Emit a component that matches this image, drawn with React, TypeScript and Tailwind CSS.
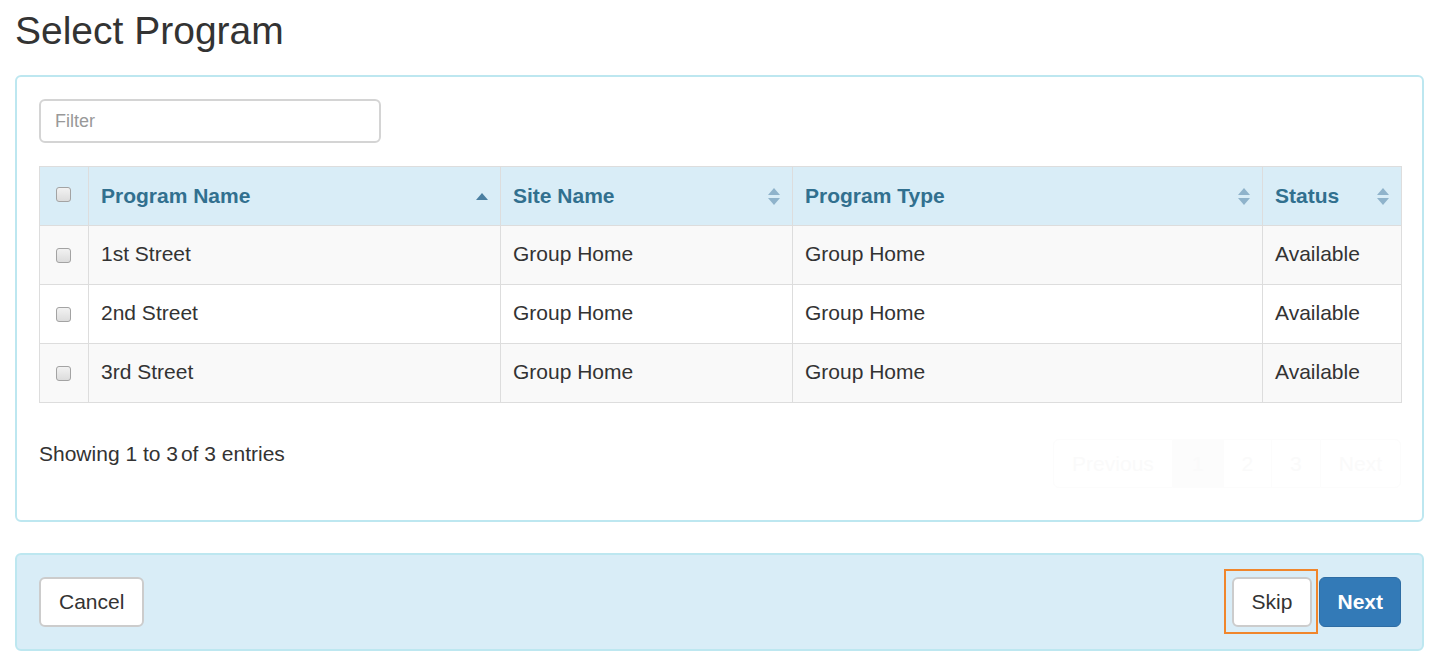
import React from "react";

type Row = { name: string; site: string; type: string; status: string };

const ROWS: Row[] = [
  { name: "1st Street", site: "Group Home", type: "Group Home", status: "Available" },
  { name: "2nd Street", site: "Group Home", type: "Group Home", status: "Available" },
  { name: "3rd Street", site: "Group Home", type: "Group Home", status: "Available" },
];

function Checkbox() {
  return (
    <span className="block h-[15px] w-[15px] rounded-[3px] border border-[#a3a3a3] bg-gradient-to-b from-[#f2f2f2] to-[#dcdcdc]" />
  );
}

function SortAsc() {
  return (
    <svg width="12" height="7" viewBox="0 0 12 7" className="shrink-0">
      <path d="M6 0 L12 7 L0 7 Z" fill="#4b7fa1" />
    </svg>
  );
}

function SortBoth() {
  return (
    <svg width="12" height="17" viewBox="0 0 12 17" className="shrink-0">
      <path d="M6 0 L12 7 L0 7 Z" fill="#8fb3cb" />
      <path d="M0 10 L12 10 L6 17 Z" fill="#8fb3cb" />
    </svg>
  );
}

function HeadCell({ label, sort, width }: { label: string; sort: "asc" | "both"; width: string }) {
  return (
    <th className={`${width} border border-[#dddddd] px-[12px] py-[14px] text-left font-bold`}>
      <div className="flex items-center justify-between leading-[30px]">
        <span>{label}</span>
        {sort === "asc" ? <SortAsc /> : <SortBoth />}
      </div>
    </th>
  );
}

export default function App() {
  return (
    <div
      className="h-screen overflow-hidden bg-white pl-[15px] pr-[11px] text-[21px] text-[#333333]"
      style={{ fontFamily: '"Liberation Sans", Arial, sans-serif' }}
    >
      <h1 className="pt-[7px] text-[39px] leading-[47px] font-normal">Select Program</h1>

      <div className="mt-[21px] rounded-[6px] border-2 border-[#bde7f0] pl-[22px] pr-[21px] pt-[22px] pb-[32px]">
        <input
          type="text"
          placeholder="Filter"
          className="block h-[44px] w-[342px] rounded-[6px] border-2 border-[#d4d4d4] px-[14px] text-[18px] placeholder:text-[#999999] focus:outline-none"
        />

        <table className="mt-[23px] w-full table-fixed border-collapse">
          <thead className="bg-[#d9edf7] text-[#31708f]">
            <tr>
              <th className="w-[49px] border border-[#dddddd] py-[14px]">
                <div className="flex h-[30px] items-center justify-center pr-[2px] pb-[4px]">
                  <Checkbox />
                </div>
              </th>
              <HeadCell label="Program Name" sort="asc" width="w-[412px]" />
              <HeadCell label="Site Name" sort="both" width="w-[292px]" />
              <HeadCell label="Program Type" sort="both" width="w-[470px]" />
              <HeadCell label="Status" sort="both" width="w-[139px]" />
            </tr>
          </thead>
          <tbody>
            {ROWS.map((r, i) => (
              <tr key={r.name} className={i % 2 === 0 ? "bg-[#f9f9f9]" : "bg-white"}>
                <td className="border border-[#dddddd] py-[14px]">
                  <div className="flex h-[30px] items-center justify-center pr-[2px]">
                    <Checkbox />
                  </div>
                </td>
                <td className="border border-[#dddddd] px-[12px] pt-[13px] pb-[15px] leading-[30px]">{r.name}</td>
                <td className="border border-[#dddddd] px-[12px] pt-[13px] pb-[15px] leading-[30px]">{r.site}</td>
                <td className="border border-[#dddddd] px-[12px] pt-[13px] pb-[15px] leading-[30px]">{r.type}</td>
                <td className="border border-[#dddddd] px-[12px] pt-[13px] pb-[15px] leading-[30px]">{r.status}</td>
              </tr>
            ))}
          </tbody>
        </table>

        <div className="mt-[36px] flex items-start justify-between">
          <div className="leading-[30px]">
            Showing 1 to 3<span className="ml-[3px]">of 3 entries</span>
          </div>
          <div className="flex h-[49px] text-[#fafafa]">
            <span className="flex items-center rounded-l-[6px] border border-[#fcfcfc] px-[18px]">Previous</span>
            <span className="flex w-[50px] items-center justify-center border-y border-[#fcfcfc] bg-[#fcfcfc]">1</span>
            <span className="flex w-[49px] items-center justify-center border border-[#fcfcfc]">2</span>
            <span className="flex w-[48px] items-center justify-center border-y border-[#fcfcfc]">3</span>
            <span className="flex items-center rounded-r-[6px] border border-[#fcfcfc] px-[18px]">Next</span>
          </div>
        </div>
      </div>

      <div className="mt-[31px] flex items-center justify-between rounded-[6px] border-2 border-[#bde7f0] bg-[#d9edf7] pl-[22px] pr-[21px] py-[22px]">
        <button className="h-[50px] rounded-[6px] border-2 border-[#cccccc] bg-white px-[18px] leading-[30px]">
          Cancel
        </button>
        <div className="flex items-center gap-[7px]">
          <div className="relative">
            <button className="h-[50px] rounded-[6px] border-2 border-[#cccccc] bg-white px-[18px] leading-[30px]">
              Skip
            </button>
            <span className="pointer-events-none absolute -top-[8px] -bottom-[7px] -left-[8px] -right-[6px] border-2 border-[#f0862c]" />
          </div>
          <button className="h-[50px] rounded-[6px] border border-[#2e6da4] bg-[#337ab7] px-[17px] font-bold leading-[30px] text-white">
            Next
          </button>
        </div>
      </div>
    </div>
  );
}
